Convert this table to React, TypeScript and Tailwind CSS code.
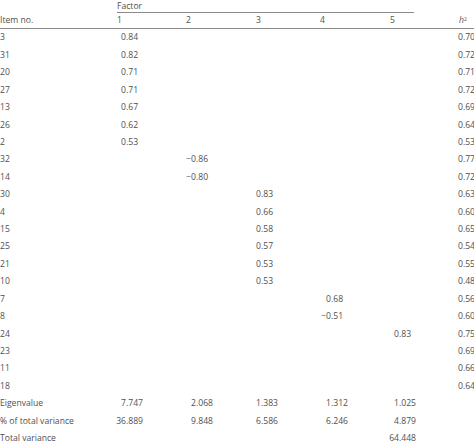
const cols = "grid grid-cols-[117px_69px_70px_64px_70px_69px_1fr]";

// decimal point offset inside each factor column
const dec = ["w-[9px]", "w-[10px]", "w-[5px]", "w-[11px]", "w-[9px]"];

type Row = { item: string; vals: (string | null)[]; h2?: string };

const rows: Row[] = [
  { item: "3", vals: ["0.84", null, null, null, null], h2: "0.70" },
  { item: "31", vals: ["0.82", null, null, null, null], h2: "0.72" },
  { item: "20", vals: ["0.71", null, null, null, null], h2: "0.71" },
  { item: "27", vals: ["0.71", null, null, null, null], h2: "0.72" },
  { item: "13", vals: ["0.67", null, null, null, null], h2: "0.69" },
  { item: "26", vals: ["0.62", null, null, null, null], h2: "0.64" },
  { item: "2", vals: ["0.53", null, null, null, null], h2: "0.53" },
  { item: "32", vals: [null, "\u22120.86", null, null, null], h2: "0.77" },
  { item: "14", vals: [null, "\u22120.80", null, null, null], h2: "0.72" },
  { item: "30", vals: [null, null, "0.83", null, null], h2: "0.63" },
  { item: "4", vals: [null, null, "0.66", null, null], h2: "0.60" },
  { item: "15", vals: [null, null, "0.58", null, null], h2: "0.65" },
  { item: "25", vals: [null, null, "0.57", null, null], h2: "0.54" },
  { item: "21", vals: [null, null, "0.53", null, null], h2: "0.55" },
  { item: "10", vals: [null, null, "0.53", null, null], h2: "0.48" },
  { item: "7", vals: [null, null, null, "0.68", null], h2: "0.56" },
  { item: "8", vals: [null, null, null, "\u22120.51", null], h2: "0.60" },
  { item: "24", vals: [null, null, null, null, "0.83"], h2: "0.75" },
  { item: "23", vals: [null, null, null, null, null], h2: "0.69" },
  { item: "11", vals: [null, null, null, null, null], h2: "0.66" },
  { item: "18", vals: [null, null, null, null, null], h2: "0.64" },
  { item: "Eigenvalue", vals: ["7.747", "2.068", "1.383", "1.312", "1.025"] },
  { item: "% of total variance", vals: ["36.889", "9.848", "6.586", "6.246", "4.879"] },
  { item: "Total variance", vals: [null, null, null, null, "64.448"] },
];

function Num({ v, i }: { v: string; i: number }) {
  const [a, b] = v.split(".");
  return (
    <div className="flex">
      <span className={`flex justify-end whitespace-nowrap ${dec[i]}`}>{a}</span>
      <span>.{b}</span>
    </div>
  );
}

export default function App() {
  return (
    <div
      className="w-[474px] h-[444px] overflow-hidden bg-white text-[#505050] text-[8.6px] leading-none"
      style={{ fontFamily: '"Open Sans", "Noto Sans", sans-serif' }}
    >
      {/* Factor heading */}
      <div className={`${cols} h-[13px]`}>
        <div />
        <div className="col-span-5 flex flex-col justify-between">
          <span className="pt-[2px]">Factor</span>
          <div className="w-[297px] border-b border-[#8a8a8a]" />
        </div>
      </div>

      {/* column headings */}
      <div className={`${cols} h-[16px] items-center border-b border-[#8a8a8a]`}>
        <div>Item no.</div>
        <div>1</div>
        <div>2</div>
        <div>3</div>
        <div>4</div>
        <div>5</div>
        <div className="italic">
          h<sup className="text-[5px] not-italic">2</sup>
        </div>
      </div>

      {rows.map((r) => (
        <div key={r.item} className={`${cols} h-[17.43px] items-center`}>
          <div className="whitespace-nowrap">{r.item}</div>
          {r.vals.map((v, i) => (
            <div key={i}>{v && <Num v={v} i={i} />}</div>
          ))}
          <div className="-ml-[1px] whitespace-nowrap">{r.h2}</div>
        </div>
      ))}
    </div>
  );
}
